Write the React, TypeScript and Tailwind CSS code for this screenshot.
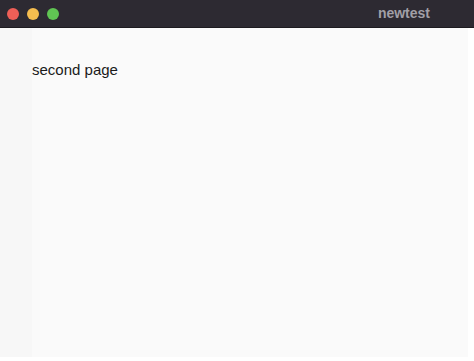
export default function App() {
  return (
    <div className="w-[474px] h-[361px] bg-white flex flex-col" style={{ fontFamily: '"Liberation Sans", Arial, sans-serif' }}>
      <div className="h-[28px] bg-[#2d2a32] flex items-center pl-[7px] pr-[44px] border-b border-[#1d1b20]">
        <div className="flex gap-[8px]">
          <div className="w-[12px] h-[12px] rounded-full bg-[#ee5f57]" />
          <div className="w-[12px] h-[12px] rounded-full bg-[#f5bd4f]" />
          <div className="w-[12px] h-[12px] rounded-full bg-[#60c553]" />
        </div>
        <div className="flex-1" />
        <div className="text-[14px] font-bold text-[#a19fa6]">newtest</div>
      </div>
      <div className="flex-1 flex pb-[4px] pr-[6px]">
        <div className="w-[32px] bg-[#f7f7f7]" />
        <div className="flex-1 bg-[#fafafa] pt-[31px]">
          <div className="text-[15px] text-[#1a1a1a]">second page</div>
        </div>
      </div>
    </div>
  );
}
